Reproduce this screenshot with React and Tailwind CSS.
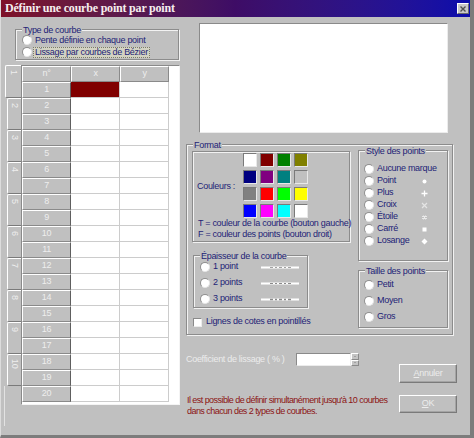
import React from 'react';

const rows = Array.from({ length: 20 }, (_, i) => i + 1);
const tabs = Array.from({ length: 10 }, (_, i) => i + 1);

const swatches = [
  '#ffffff', '#800000', '#008000', '#808000',
  '#000080', '#800080', '#008080', '#c0c0c0',
  '#808080', '#ff0000', '#00ff00', '#ffff00',
  '#0000ff', '#ff00ff', '#00ffff', '#ffffff'
];

const Radio = () => (
  <span className="w-[10px] h-[10px] shrink-0 rounded-full bg-white border border-[#8e8e8e] border-r-[#e6e6e6] border-b-[#e6e6e6]" />
);

// etched frame with the caption sitting on the top line
const Group = ({ label, className = '', children }) => (
  <div className={`relative border border-[#8c8c8c] shadow-[inset_1px_1px_0_#f2f2f2,1px_1px_0_#f2f2f2] ${className}`}>
    <span className="absolute -top-[5px] left-[6px] bg-[#c0c0c0] px-[1px] leading-[10px] whitespace-nowrap">
      {label}
    </span>
    {children}
  </div>
);

const Marker = ({ type }) => {
  if (!type) return null;
  return (
    <svg width="7" height="7" viewBox="0 0 7 7" className="shrink-0">
      {type === 'point' && <circle cx="3.5" cy="3.5" r="2" fill="#fff" />}
      {type === 'plus' && <path d="M3.5 0.5v6M0.5 3.5h6" stroke="#fff" strokeWidth="1.3" />}
      {type === 'croix' && <path d="M1 1l5 5M6 1l-5 5" stroke="#e4e4e4" strokeWidth="1.2" />}
      {type === 'etoile' && <path d="M1 2.5h5M1 4.5h5M2.5 1.5l2 4M4.5 1.5l-2 4" stroke="#ececec" strokeWidth="0.9" />}
      {type === 'carre' && <rect x="1.5" y="1.5" width="4" height="4" fill="#fff" />}
      {type === 'losange' && <path d="M3.5 0.5L6.5 3.5L3.5 6.5L0.5 3.5Z" fill="#fff" />}
    </svg>
  );
};

const LineSample = ({ weight }) => (
  <svg width="38" height="5" viewBox="0 0 38 5">
    <rect x="0" y="1.5" width="38" height="2" fill="#fff" />
    <path
      d="M9 2.5h3M14 2.5h2M18 2.5h3M23 2.5h2M27 2.5h3"
      stroke="#8a8a8a"
      strokeWidth={weight}
    />
  </svg>
);

const pointStyles = [
  ['Aucune marque', null],
  ['Point', 'point'],
  ['Plus', 'plus'],
  ['Croix', 'croix'],
  ['Étoile', 'etoile'],
  ['Carré', 'carre'],
  ['Losange', 'losange']
];

export default function App() {
  return (
    <div className="w-[474px] h-[438px] bg-[#c0c0c0] border-l border-l-[#dcdcdc] border-r-[4px] border-b-[3px] border-r-[#7c7c7c] border-b-[#7c7c7c] overflow-hidden font-['Liberation_Sans',Arial,sans-serif] text-[9px] tracking-[-0.3px] text-[#1e1e76]">
      {/* Title bar */}
      <div className="h-[17px] flex items-center bg-linear-to-r from-[#7e1028] via-[#3e0c66] to-[#0a0cac]">
        <span className="flex-1 pl-[4px] font-['Liberation_Serif','Times_New_Roman',serif] font-bold text-[12px] tracking-[-0.2px] leading-[17px] text-[#f6eeee]">
          Définir une courbe point par point
        </span>
        <span className="w-[12px] h-[11px] mr-[1px] flex items-center justify-center bg-[#c8c8c8] border border-t-white border-l-white border-r-[#6a6a6a] border-b-[#6a6a6a]">
          <svg width="6" height="6" viewBox="0 0 6 6">
            <path d="M0.5 0.5l5 5M5.5 0.5l-5 5" stroke="#505050" strokeWidth="1.4" />
          </svg>
        </span>
      </div>

      <div className="flex h-[418px]">
        {/* Left column */}
        <div className="w-[183px] shrink-0 flex flex-col">
          <Group label="Type de courbe" className="ml-[14px] mt-[12px] w-[164px] h-[31px] pt-[4px] pl-[6px]">
            <div className="flex items-center h-[12px] gap-[3px]">
              <Radio />
              <span className="whitespace-nowrap leading-[10px]">Pente définie en chaque point</span>
            </div>
            <div className="flex items-center h-[12px] gap-[1px]">
              <Radio />
              <span className="whitespace-nowrap px-[1px] leading-[9px] border border-dotted border-[#7a7a6a] bg-[#d2d2c2]">
                Lissage par courbes de Bézier
              </span>
            </div>
          </Group>

          <div className="flex mt-[5px]">
            {/* vertical tabs */}
            <div className="ml-[3px] w-[17px] flex flex-col items-end">
              {tabs.map(n => (
                <div
                  key={n}
                  className={`${n === 1 ? 'w-[16px] h-[33px]' : 'w-[14px] h-[32px]'} flex justify-center pt-[4px] bg-[#c0c0c0] border-l border-t border-white border-b border-b-[#7a7a7a] rounded-tl-[2px] rounded-bl-[2px]`}
                >
                  <span className="[writing-mode:vertical-rl] text-[#eeeeee] leading-[9px]">{n}</span>
                </div>
              ))}
              <div className="w-[17px] h-[40px] border-l border-l-[#e2e2e2]" />
            </div>

            {/* point table */}
            <div className="w-[159px] h-[340px] bg-white border border-t-[#8a8a8a] border-l-[#8a8a8a] border-r-[#f4f4f4] border-b-[#f4f4f4]">
              <div className="flex h-[16px]">
                {['n°', 'x', 'y'].map(h => (
                  <div
                    key={h}
                    className="w-[49px] flex items-center justify-center bg-[#c0c0c0] border border-t-white border-l-white border-r-[#8a8a8a] border-b-[#8a8a8a] text-[#eeeeee]"
                  >
                    {h}
                  </div>
                ))}
                <div className="flex-1 bg-white" />
              </div>
              {rows.map(r => (
                <div key={r} className="flex h-[16px]">
                  <div className="w-[49px] flex items-center justify-center bg-[#c0c0c0] border border-t-white border-l-white border-r-[#5e5e5e] border-b-[#8a8a8a] text-[#eeeeee]">
                    {r}
                  </div>
                  <div className={`w-[49px] border-r border-b border-[#cccccc] ${r === 1 ? 'bg-[#800000]' : 'bg-white'}`} />
                  <div className="w-[49px] border-r border-b border-[#cccccc] bg-white" />
                  <div className="flex-1 bg-white" />
                </div>
              ))}
            </div>
          </div>
        </div>

        {/* Right column */}
        <div className="flex-1 flex flex-col">
          <div className="ml-[15px] mt-[6px] w-[249px] h-[110px] bg-white border border-t-[#8a8a8a] border-l-[#8a8a8a] border-r-[#ececec] border-b-[#ececec]" />

          <Group label="Format" className="ml-[2px] mt-[11px] w-[267px] h-[191px] flex">
            <div className="ml-[5px] mt-[6px] w-[158px] flex flex-col">
              <div className="w-[158px] h-[91px] border border-[#8c8c8c] shadow-[inset_1px_1px_0_#f2f2f2,1px_1px_0_#f2f2f2] flex flex-col">
                <div className="flex">
                  <span className="w-[50px] pl-[4px] pt-[4px] self-center whitespace-nowrap">Couleurs :</span>
                  <div className="mt-[1px] grid grid-cols-4 gap-[3px]">
                    {swatches.map((c, i) => (
                      <span
                        key={i}
                        className="w-[14px] h-[14px] border border-t-[#7a7a7a] border-l-[#7a7a7a] border-r-[#e8e8e8] border-b-[#e8e8e8]"
                        style={{ backgroundColor: c }}
                      />
                    ))}
                  </div>
                </div>
                <div className="pl-[5px] leading-[11px] whitespace-nowrap">T = couleur de la courbe (bouton gauche)</div>
                <div className="pl-[5px] leading-[11px] whitespace-nowrap">F = couleur des points (bouton droit)</div>
              </div>

              <Group label="Épaisseur de la courbe" className="ml-[1px] mt-[13px] w-[115px] h-[53px] pt-[3px] pl-[6px]">
                {[['1 point', 0.8], ['2 points', 1.2], ['3 points', 1.6]].map(([t, w]) => (
                  <div key={t} className="flex items-center h-[16px] gap-[3px]">
                    <Radio />
                    <span className="w-[45px] whitespace-nowrap">{t}</span>
                    <LineSample weight={w} />
                  </div>
                ))}
              </Group>

              <div className="ml-[1px] mt-[9px] flex items-center h-[10px] gap-[4px]">
                <span className="w-[9px] h-[9px] bg-white border border-t-[#8a8a8a] border-l-[#8a8a8a] border-r-[#ececec] border-b-[#ececec]" />
                <span className="whitespace-nowrap">Lignes de cotes en pointillés</span>
              </div>
            </div>

            <div className="ml-[8px] mt-[5px] flex flex-col">
              <Group label="Style des points" className="w-[90px] h-[111px] pt-[12px] pl-[5px]">
                {pointStyles.map(([t, m]) => (
                  <div key={t} className="flex items-center h-[12px] gap-[3px]">
                    <Radio />
                    <span className="w-[41px] whitespace-nowrap">{t}</span>
                    <Marker type={m} />
                  </div>
                ))}
              </Group>
              <Group label="Taille des points" className="mt-[9px] w-[90px] h-[58px] pt-[6px] pl-[5px]">
                {['Petit', 'Moyen', 'Gros'].map(t => (
                  <div key={t} className="flex items-center h-[16px] gap-[3px]">
                    <Radio />
                    <span>{t}</span>
                  </div>
                ))}
              </Group>
            </div>
          </Group>

          <div className="flex">
            <div className="w-[215px] shrink-0">
              <div className="mt-[18px] flex items-center h-[13px]">
                <span className="ml-[2px] w-[110px] whitespace-nowrap text-[#ececec]">Coefficient de lissage ( % )</span>
                <span className="w-[55px] h-[13px] bg-white border border-t-[#8a8a8a] border-l-[#8a8a8a] border-r-[#ececec] border-b-[#ececec]" />
                <div className="w-[8px] h-[13px] flex flex-col">
                  {[0, 1].map(i => (
                    <span key={i} className="flex-1 flex items-center justify-center bg-[#c4c4c4] border border-t-white border-l-white border-r-[#8a8a8a] border-b-[#8a8a8a]">
                      <span className="w-[2px] h-[1px] bg-[#a0a0a0]" />
                    </span>
                  ))}
                </div>
              </div>
              <div className="mt-[29px] ml-[3px] leading-[11px] whitespace-nowrap tracking-[-0.55px] text-[#8c1414]">
                Il est possible de définir simultanément jusqu'à 10 courbes
                <br />
                dans chacun des 2 types de courbes.
              </div>
            </div>
            <div className="mt-[29px] flex flex-col">
              <button className="w-[58px] h-[19px] flex items-center justify-center bg-[#c0c0c0] border border-t-white border-l-white border-r-[#7a7a7a] border-b-[#7a7a7a] shadow-[inset_-1px_-1px_0_#a4a4a4] text-[#ececec] text-[9px] tracking-[-0.3px]">
                <span><u>A</u>nnuler</span>
              </button>
              <button className="mt-[12px] w-[58px] h-[18px] flex items-center justify-center bg-[#c0c0c0] border border-t-white border-l-white border-r-[#7a7a7a] border-b-[#7a7a7a] shadow-[inset_-1px_-1px_0_#a4a4a4] text-[#ececec] text-[9px] tracking-[-0.3px]">
                <span><u>O</u>K</span>
              </button>
            </div>
          </div>
        </div>
      </div>
    </div>
  );
}
